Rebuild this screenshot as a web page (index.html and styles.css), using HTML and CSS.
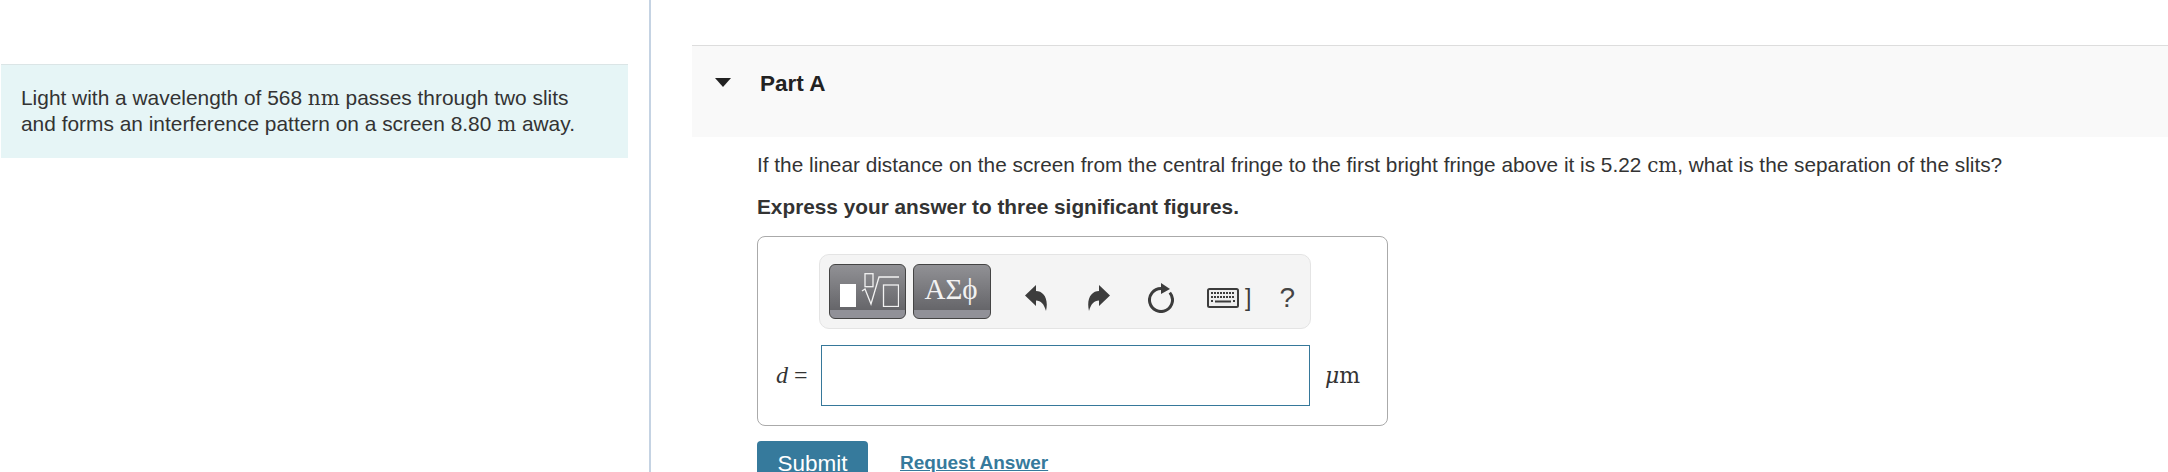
FILE: index.html
```html
<!DOCTYPE html>
<html lang="en">
<head>
    <meta charset="UTF-8">
    <title>Part A</title>
    <link rel="stylesheet" href="styles.css">
</head>
<body>
    <div class="page">
        <div class="intro-col">
            <div class="intro">
                <p>Light with a wavelength of 568 <span class="unit">nm</span> passes through two slits<br>and forms an interference pattern on a screen 8.80 <span class="unit">m</span> away.</p>
            </div>
        </div>
        <div class="main-col">
            <div class="part-head">
                <svg class="caret" width="16" height="9" viewBox="0 0 16 9"><path d="M0 0H16L8 9Z" fill="#222"/></svg>
                <h2>Part A</h2>
            </div>
            <div class="part-body">
                <p class="question">If the linear distance on the screen from the central fringe to the first bright fringe above it is 5.22 <span class="unit">cm</span>, what is the separation of the slits?</p>
                <p class="hint">Express your answer to three significant figures.</p>
                <div class="answer-box">
                    <div class="toolbar">
                        <div class="tool-btn tool-btn-math">
                            <svg width="59" height="34" viewBox="0 0 59 34">
                                <rect x="0" y="11" width="16" height="23" fill="#fff"/>
                                <g fill="none" stroke="#f2f2f2" stroke-width="1.3">
                                    <rect x="25" y="0.7" width="8" height="13"/>
                                    <path d="M22 18L25 16L31 31L39 4H59"/>
                                    <rect x="43.500" y="12" width="15" height="21.500"/>
                                </g>
                            </svg>
                        </div>
                        <div class="tool-btn tool-btn-greek">ΑΣϕ</div>
                        <div class="tool-icons">
                            <svg class="icon-undo" width="22" height="26" viewBox="0 0 22 26"><path d="M0 10.500L11 0V6C18 6 24 13 21 26C19 19 16 15.500 11 15.500V21Z" fill="#3c3c3c"/></svg>
                            <svg class="icon-redo" width="22" height="26" viewBox="0 0 22 26"><path d="M22 10.500L11 0V6C4 6 -2 13 1 26C3 19 6 15.500 11 15.500V21Z" fill="#3c3c3c"/></svg>
                            <svg class="icon-reset" width="26" height="30" viewBox="0 0 26 30"><path d="M13 5.500A11.500 11.500 0 1 0 21.800 9.600" fill="none" stroke="#3c3c3c" stroke-width="3"/><path d="M13 0L22 6L13 11Z" fill="#3c3c3c"/></svg>
                            <svg class="icon-keys" width="32" height="20" viewBox="0 0 32 20">
                                <rect x="1" y="1" width="30" height="18" rx="1.500" fill="#eee" stroke="#3c3c3c" stroke-width="2"/>
                                <path d="M4 5h24M4 9h24" stroke="#3c3c3c" stroke-width="2" stroke-dasharray="2 1"/>
                                <path d="M4 13h2M8 13.500h16M26 13h2" stroke="#3c3c3c" stroke-width="2"/>
                            </svg>
                            <span class="bracket">]</span>
                            <span class="help">?</span>
                        </div>
                    </div>
                    <div class="answer-row">
                        <span class="var"><i>d</i> =</span>
                        <input class="answer-input" type="text">
                        <span class="answer-unit"><i>μ</i>m</span>
                    </div>
                </div>
                <div class="actions">
                    <button class="submit" type="button">Submit</button>
                    <a class="request" href="#">Request Answer</a>
                </div>
            </div>
        </div>
    </div>
</body>
</html>
```

FILE: styles.css
```css
html, body {
    margin: 0;
    height: 472px;
    overflow: hidden;
    background: #fff;
}
body {
    font-family: "Liberation Sans", Arial, sans-serif;
    font-size: 20.900px;
    color: #333;
}
p {
    margin: 0;
}
.page {
    display: flex;
    height: 472px;
}
.intro-col {
    flex: 0 0 651px;
    box-sizing: border-box;
    padding: 64px 21px 0 1px;
    border-right: 2px solid #c5d3e3;
}
.intro {
    height: 94px;
    box-sizing: border-box;
    padding: 20px 20px 0;
    background: #e6f5f6;
    border-top: 1px solid #dbe5e6;
    line-height: 25px;
}
.unit {
    font-family: "DejaVu Serif", serif;
    font-size: 20px;
}
.main-col {
    flex: 1;
    padding: 45px 0 0 41px;
    min-width: 0;
}
.part-head {
    display: flex;
    align-items: flex-start;
    height: 92px;
    box-sizing: border-box;
    padding: 32px 0 0 23px;
    background: #f9f9f9;
    border-top: 1px solid #ddd;
}
.caret {
    margin-right: 29px;
}
.part-head h2 {
    margin: -8px 0 0;
    font-size: 22.500px;
    line-height: 28px;
    color: #222;
}
.part-body {
    padding: 15px 0 0 65px;
}
.question {
    font-size: 20.800px;
    line-height: 26px;
}
.hint {
    margin-top: 16px;
    font-size: 20.800px;
    font-weight: bold;
    line-height: 26px;
}
.answer-box {
    width: 631px;
    height: 190px;
    box-sizing: border-box;
    margin-top: 16px;
    padding: 17px 0 0 61px;
    border: 1px solid #aaa;
    border-radius: 8px;
}
.toolbar {
    display: flex;
    align-items: center;
    width: 492px;
    height: 75px;
    box-sizing: border-box;
    padding-left: 9px;
    gap: 7px;
    background: #f4f4f4;
    border: 1px solid #e4e4e4;
    border-radius: 10px;
}
.tool-btn {
    display: flex;
    justify-content: center;
    align-items: center;
    height: 55px;
    box-sizing: border-box;
    padding-bottom: 4px;
    background: linear-gradient(#919195, #66666a 84%, #919198 84%);
    border: 1px solid #444;
    border-radius: 6px;
    color: #f2f2f2;
}
.tool-btn-math {
    width: 77px;
    padding-left: 4px;
}
.tool-btn-greek {
    width: 78px;
    padding-right: 2px;
    font-family: "Liberation Serif", serif;
    font-size: 29px;
}
.tool-icons {
    display: flex;
    align-items: center;
    margin: 13px 0 0 27px;
}
.icon-redo {
    margin-left: 41px;
}
.icon-reset {
    margin-left: 38px;
}
.icon-keys {
    margin-left: 33px;
}
.bracket {
    margin-left: 6px;
    font-size: 23px;
    font-weight: 300;
    color: #3c3c3c;
}
.help {
    margin-left: 28px;
    font-size: 28px;
    color: #444;
}
.answer-row {
    display: flex;
    align-items: center;
    margin: 16px 0 0 -43px;
}
.var {
    width: 45px;
    font-family: "Liberation Serif", serif;
    font-size: 24px;
    white-space: nowrap;
}
.answer-input {
    width: 489px;
    height: 61px;
    box-sizing: border-box;
    margin: 0;
    border: 1.500px solid #36789a;
    background: #fff;
}
.answer-unit {
    margin-left: 15px;
    font-family: "DejaVu Serif", serif;
    font-size: 22px;
}
.actions {
    display: flex;
    align-items: flex-start;
    margin-top: 15px;
}
.submit {
    width: 111px;
    height: 50px;
    padding: 0 0 4px;
    background: #367a9c;
    color: #fff;
    border: none;
    border-radius: 4px;
    font-family: "Liberation Sans", Arial, sans-serif;
    font-size: 22.500px;
}
.request {
    margin: 11px 0 0 32px;
    font-size: 19px;
    font-weight: bold;
    color: #367a9c;
}
```
